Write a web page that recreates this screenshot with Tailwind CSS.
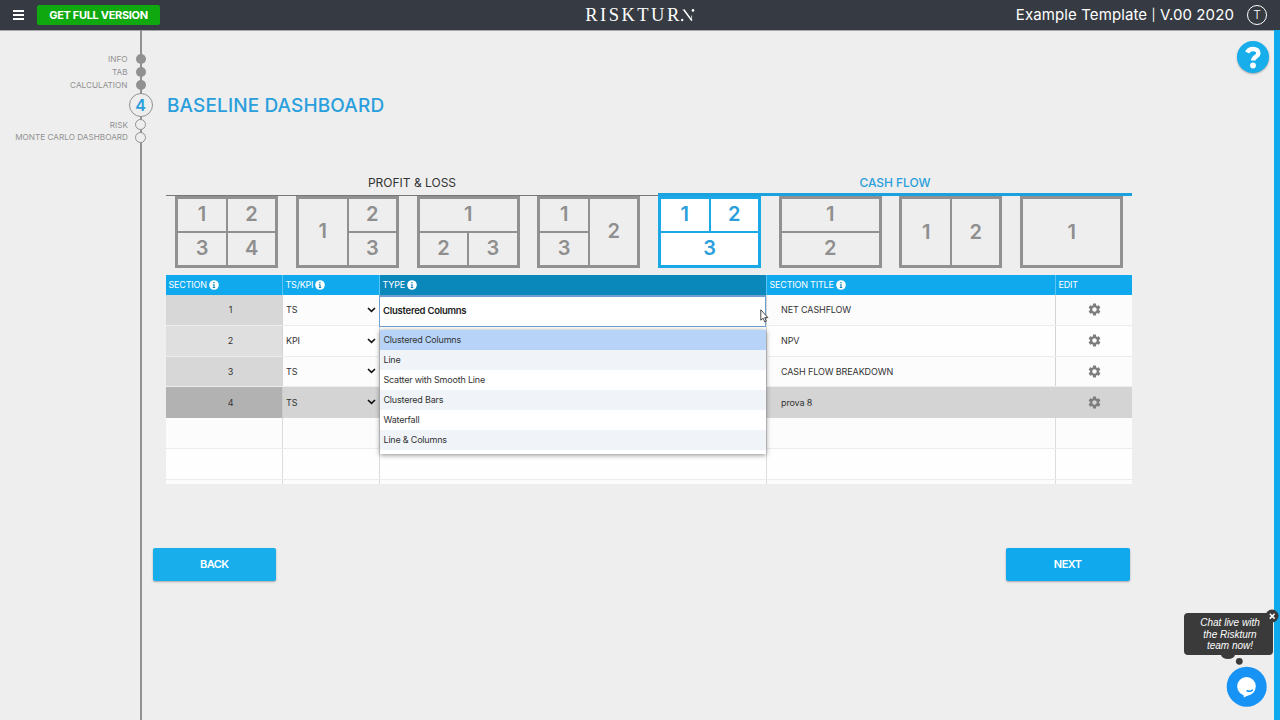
<!DOCTYPE html>
<html lang="en">

<head>
    <meta charset="UTF-8">
    <meta name="viewport" content="width=device-width, initial-scale=1.0">
    <script src="https://cdn.jsdelivr.net/npm/@tailwindcss/browser@4"></script>
    <title>Riskturn - Baseline Dashboard</title>
</head>

<body class="relative h-[720px] w-[1280px] overflow-hidden bg-[#eeeeee] font-['Inter',sans-serif]">
    <!-- Shared icons -->
    <svg class="hidden">
        <symbol id="info" viewBox="0 0 10 10">
            <circle cx="5" cy="5" r="4.8" fill="#fff" />
            <path d="M4.3 2h1.3v1.3H4.3zM3.8 4.2h1.8v2.9h.6v.8H3.8v-.8h.6V5h-.6z" fill="#0e86bb" />
        </symbol>
        <symbol id="gear" viewBox="1.5 1.5 21 21">
            <path d="M19.14 12.94c.04-.3.06-.61.06-.94 0-.32-.02-.64-.07-.94l2.03-1.58c.18-.14.23-.41.12-.61l-1.92-3.32c-.12-.22-.37-.29-.59-.22l-2.39.96c-.5-.38-1.03-.7-1.62-.94l-.36-2.54c-.04-.24-.24-.41-.48-.41h-3.84c-.24 0-.43.17-.47.41l-.36 2.54c-.59.24-1.13.57-1.62.94l-2.39-.96c-.22-.08-.47 0-.59.22L2.74 8.87c-.12.21-.08.47.12.61l2.03 1.58c-.05.3-.09.63-.09.94s.02.64.07.94l-2.03 1.58c-.18.14-.23.41-.12.61l1.92 3.32c.12.22.37.29.59.22l2.39-.96c.5.38 1.03.7 1.62.94l.36 2.54c.05.24.24.41.48.41h3.84c.24 0 .44-.17.47-.41l.36-2.54c.59-.24 1.13-.56 1.62-.94l2.39.96c.22.08.47 0 .59-.22l1.92-3.32c.12-.22.07-.47-.12-.61l-2.01-1.58zM12 15.6c-1.98 0-3.6-1.62-3.6-3.6s1.62-3.6 3.6-3.6 3.6 1.62 3.6 3.6-1.62 3.6-3.6 3.6z" fill="#7d7d7d" />
        </symbol>
        <symbol id="chevron" viewBox="0 0 8 6">
            <path d="M.5 1 4 4.4l3.5-3.4" fill="none" stroke="#111" stroke-width="1.6" />
        </symbol>
    </svg>

    <!-- Top bar -->
    <header class="flex h-[30px] items-center bg-[#363a42] text-white shadow-[0_1px_0_#a5a6a8]">
        <div class="flex flex-1 items-center">
            <div class="ml-[13px] flex w-[11px] flex-col gap-[2px]">
                <span class="h-[2px] bg-white"></span>
                <span class="h-[2px] bg-white"></span>
                <span class="h-[2px] bg-white"></span>
            </div>
            <button class="ml-[13px] h-5 w-[123px] rounded-[2px] bg-[#0fa80f] text-[11px] font-bold tracking-[-0.33px]">GET FULL VERSION</button>
        </div>
        <div class="flex items-center">
            <span class="font-['Liberation_Serif',serif] text-[18.5px] leading-none tracking-[2.5px]">RISKTUR</span>
            <svg class="-ml-[2px] h-[14px] w-[15px]" viewBox="0 0 15 14">
                <path d="M4 2 11.8 12.6" stroke="#fff" stroke-width="1.6" />
                <path d="M2.6 2h2.4" stroke="#fff" stroke-width=".8" />
                <circle cx="2.2" cy="12" r="1.2" fill="#fff" />
                <circle cx="13" cy="2.4" r="1.3" fill="#fff" />
                <path d="M11.6 7.5v5" stroke="#fff" stroke-width=".7" />
            </svg>
        </div>
        <div class="flex flex-1 items-center justify-end">
            <span class="text-[15px] tracking-[0.1px]">Example Template <span class="relative -top-px text-[12px]">|</span> V.00 2020</span>
            <span class="mr-[13px] ml-[13px] flex size-5 items-center justify-center rounded-full border-[1.5px] border-white text-[12px] font-light">T</span>
        </div>
    </header>

    <div class="flex h-[690px]">
        <!-- Steps -->
        <aside class="relative w-[152.5px] pt-[23px] text-[8.2px] leading-none text-[#919191]">
            <div class="absolute top-0 left-[140px] h-full w-[1.5px] bg-[#919191]"></div>
            <div class="relative flex h-[12.8px] items-center justify-end gap-2 pr-[7px]">INFO<span class="size-[10px] rounded-full bg-[#919191]"></span></div>
            <div class="relative flex h-[12.8px] items-center justify-end gap-2 pr-[7px]">TAB<span class="size-[10px] rounded-full bg-[#919191]"></span></div>
            <div class="relative flex h-[12.8px] items-center justify-end gap-2 pr-[7px]">CALCULATION<span class="size-[10px] rounded-full bg-[#919191]"></span></div>
            <div class="relative flex h-[27px] items-center justify-end">
                <span class="flex size-6 items-center justify-center rounded-full border-[1.5px] border-[#919191] bg-[#eeeeee] text-[16px] font-semibold text-[#2a9fdc]">4</span>
            </div>
            <div class="relative flex h-[12.5px] items-center justify-end gap-[7px] pr-[6.5px]">RISK<span class="size-[11px] rounded-full border-[1.5px] border-[#919191] bg-[#eeeeee]"></span></div>
            <div class="relative flex h-[12.5px] items-center justify-end gap-[7px] pr-[6.5px] whitespace-nowrap">MONTE CARLO DASHBOARD<span class="size-[11px] rounded-full border-[1.5px] border-[#919191] bg-[#eeeeee]"></span></div>
        </aside>

        <main class="w-[977px]">
            <h1 class="mt-[64px] ml-[14.5px] h-6 text-[19px] leading-6 font-medium tracking-[0.12px] text-[#2a9fdc]">BASELINE DASHBOARD</h1>

            <div class="mt-[52px] ml-[13.5px] w-[966px]">
                <!-- Tabs -->
                <div class="flex h-[26px] text-center text-[12px] leading-[26px]">
                    <div class="h-[26px] w-[492px] border-b border-[#777] text-[#333]">PROFIT &amp; LOSS</div>
                    <div class="w-[474px] border-b-[3px] border-[#1ba1dd] font-medium tracking-[-0.05px] text-[#2a9fdc]">CASH FLOW</div>
                </div>

                <!-- Layout choices -->
                <div class="grid h-[79px] grid-cols-8 justify-items-center pl-[0.5px] text-[20px] leading-none font-semibold text-[#8f8f8f]">
                    <div class="grid h-[72px] w-[103px] grid-cols-2 grid-rows-2 gap-[2px] border-[3px] border-[#919191] bg-[#919191] *:flex *:items-center *:justify-center *:bg-[#eeeeee] *:pb-[2px]">
                        <span>1</span><span>2</span><span>3</span><span>4</span>
                    </div>
                    <div class="grid h-[72px] w-[103px] grid-cols-2 grid-rows-2 gap-[2px] border-[3px] border-[#919191] bg-[#919191] *:flex *:items-center *:justify-center *:bg-[#eeeeee] *:pb-[2px]">
                        <span class="row-span-2">1</span><span>2</span><span>3</span>
                    </div>
                    <div class="grid h-[72px] w-[103px] grid-cols-2 grid-rows-2 gap-[2px] border-[3px] border-[#919191] bg-[#919191] *:flex *:items-center *:justify-center *:bg-[#eeeeee] *:pb-[2px]">
                        <span class="col-span-2">1</span><span>2</span><span>3</span>
                    </div>
                    <div class="grid h-[72px] w-[103px] grid-cols-2 grid-rows-2 gap-[2px] border-[3px] border-[#919191] bg-[#919191] *:flex *:items-center *:justify-center *:bg-[#eeeeee] *:pb-[2px]">
                        <span>1</span><span class="row-span-2">2</span><span>3</span>
                    </div>
                    <div class="grid h-[72px] w-[103px] grid-cols-2 grid-rows-2 gap-[2px] border-[3px] border-[#1ba8e6] bg-[#1ba8e6] text-[#2a9fdc] *:flex *:items-center *:justify-center *:bg-white *:pb-[2px]">
                        <span>1</span><span>2</span><span class="col-span-2">3</span>
                    </div>
                    <div class="grid h-[72px] w-[103px] grid-rows-2 gap-[2px] border-[3px] border-[#919191] bg-[#919191] *:flex *:items-center *:justify-center *:bg-[#eeeeee] *:pb-[2px]">
                        <span>1</span><span>2</span>
                    </div>
                    <div class="grid h-[72px] w-[103px] grid-cols-2 gap-[2px] border-[3px] border-[#919191] bg-[#919191] *:flex *:items-center *:justify-center *:bg-[#eeeeee]">
                        <span>1</span><span>2</span>
                    </div>
                    <div class="grid h-[72px] w-[103px] border-[3px] border-[#919191] bg-[#919191] *:flex *:items-center *:justify-center *:bg-[#eeeeee]">
                        <span>1</span>
                    </div>
                </div>

                <!-- Sections table -->
                <div class="relative h-[209px] text-[9px] tracking-[-0.12px] text-[#333]">
                    <div class="grid h-5 grid-cols-[117px_97px_387px_289px_76px] bg-[#10a9ee] tracking-[-0.2px] text-white *:flex *:items-center *:gap-[2px] *:border-[#5cc4f3] *:pl-[2.5px]">
                        <div class="border-r">SECTION<svg class="size-[10px]"><use href="#info" /></svg></div>
                        <div class="border-r">TS/KPI<svg class="size-[10px]"><use href="#info" /></svg></div>
                        <div class="border-r bg-[#0a87bb]">TYPE<svg class="size-[10px]"><use href="#info" /></svg></div>
                        <div class="border-r">SECTION TITLE<svg class="size-[10px]"><use href="#info" /></svg></div>
                        <div>EDIT</div>
                    </div>
                    <div class="grid h-[30.8px] grid-cols-[117px_97px_387px_289px_76px] border-b border-[#ececec] bg-[#fcfcfc] *:flex *:items-center *:border-[#d4d4d4]">
                        <div class="justify-center border-r bg-[#d7d7d7] pl-[13px]">1</div>
                        <div class="justify-between border-r pr-[3px] pl-[3px]">TS<svg class="h-[6px] w-[9px]"><use href="#chevron" /></svg></div>
                        <div class="border-r"></div>
                        <div class="border-r pl-[14px]">NET CASHFLOW</div>
                        <div class="justify-center"><svg class="size-[13px]"><use href="#gear" /></svg></div>
                    </div>
                    <div class="grid h-[30.8px] grid-cols-[117px_97px_387px_289px_76px] border-b border-[#ececec] bg-[#fefefe] *:flex *:items-center *:border-[#d4d4d4]">
                        <div class="justify-center border-r bg-[#dfdfdf] pl-[13px]">2</div>
                        <div class="justify-between border-r pr-[3px] pl-[3px]">KPI<svg class="h-[6px] w-[9px]"><use href="#chevron" /></svg></div>
                        <div class="border-r"></div>
                        <div class="border-r pl-[14px]">NPV</div>
                        <div class="justify-center"><svg class="size-[13px]"><use href="#gear" /></svg></div>
                    </div>
                    <div class="grid h-[30.8px] grid-cols-[117px_97px_387px_289px_76px] border-b border-[#ececec] bg-[#fcfcfc] *:flex *:items-center *:border-[#d4d4d4]">
                        <div class="justify-center border-r bg-[#d7d7d7] pl-[13px]">3</div>
                        <div class="justify-between border-r pr-[3px] pl-[3px]">TS<svg class="h-[6px] w-[9px]"><use href="#chevron" /></svg></div>
                        <div class="border-r"></div>
                        <div class="border-r pl-[14px]">CASH FLOW BREAKDOWN</div>
                        <div class="justify-center"><svg class="size-[13px]"><use href="#gear" /></svg></div>
                    </div>
                    <div class="grid h-[30.8px] grid-cols-[117px_97px_387px_289px_76px] bg-[#d4d4d4] *:flex *:items-center *:border-[#cbcbcb] *:pb-px">
                        <div class="justify-center border-r bg-[#b2b2b2] pl-[13px]">4</div>
                        <div class="justify-between border-r pr-[3px] pl-[3px]">TS<svg class="h-[6px] w-[9px]"><use href="#chevron" /></svg></div>
                        <div class="border-r"></div>
                        <div class="pl-[14px]">prova 8</div>
                        <div class="justify-center"><svg class="size-[13px]"><use href="#gear" /></svg></div>
                    </div>
                    <div class="grid h-[31px] grid-cols-[117px_97px_387px_289px_76px] border-b border-[#ececec] bg-[#fcfcfc] *:border-[#dcdcdc]">
                        <div class="border-r"></div><div class="border-r"></div><div class="border-r"></div><div class="border-r"></div>
                    </div>
                    <div class="grid h-[31px] grid-cols-[117px_97px_387px_289px_76px] border-b border-[#ececec] bg-[#fefefe] *:border-[#dcdcdc]">
                        <div class="border-r"></div><div class="border-r"></div><div class="border-r"></div><div class="border-r"></div>
                    </div>
                    <div class="grid h-[3.8px] grid-cols-[117px_97px_387px_289px_76px] bg-[#fcfcfc] *:border-[#dcdcdc]">
                        <div class="border-r"></div><div class="border-r"></div><div class="border-r"></div><div class="border-r"></div>
                    </div>

                    <!-- Cell editor and its list -->
                    <div class="absolute top-5 left-[213px] flex h-8 w-[387px] items-center border border-t-2 border-[#6f9fd0] bg-white pl-[3px] text-[9.5px] font-semibold tracking-[-0.25px] text-[#222]">Clustered Columns</div>
                    <div class="absolute top-[55px] left-[214px] w-[385.5px] bg-white pb-[3.5px] tracking-[-0.2px] shadow-[0_1px_5px_rgba(0,0,0,0.45)] *:h-5 *:pl-[3.5px] *:leading-[19px]">
                        <div class="bg-[#b7d3f7]">Clustered Columns</div>
                        <div class="bg-[#f0f4f8]">Line</div>
                        <div>Scatter with Smooth Line</div>
                        <div class="bg-[#f0f4f8]">Clustered Bars</div>
                        <div>Waterfall</div>
                        <div class="bg-[#f0f4f8]">Line &amp; Columns</div>
                    </div>
                    <svg class="absolute top-[34px] left-[594px] h-[14px] w-[9px]" viewBox="0 0 9 14">
                        <path d="M.8.8v10.4l2.3-2 1.6 3.6 1.6-.7-1.5-3.5h3.1z" fill="#fff" stroke="#333" stroke-width=".9" />
                    </svg>
                </div>
            </div>

            <div class="mt-[64px] flex justify-between text-[11px] font-semibold tracking-[-0.5px] text-white">
                <button class="h-[33px] w-[123.5px] rounded-[2px] bg-[#18adeb] shadow-[0_1px_2px_rgba(0,0,0,0.3)]">BACK</button>
                <button class="h-[33px] w-[123.5px] rounded-[2px] bg-[#10a9ee] shadow-[0_1px_2px_rgba(0,0,0,0.3)]">NEXT</button>
            </div>
        </main>

        <div class="ml-auto w-[6.5px] bg-[#10a9ee]"></div>
    </div>

    <!-- Help -->
    <div class="absolute top-[41px] left-[1237px] flex size-8 items-center justify-center rounded-full bg-[#18adeb] text-white shadow-[0_1px_2px_rgba(0,0,0,0.3)]">
        <svg class="size-[26px]" viewBox="0 0 26 26">
            <path d="M7.2 8.5C8.200 6.200 10.400 5 13 5c3.200 0 5.400 1.600 5.400 4.200 0 3.400-5.200 3.700-5.200 7.300" fill="none" stroke="#fff" stroke-width="4.500" />
            <circle cx="13" cy="21.500" r="2.900" fill="#fff" />
        </svg>
    </div>

    <!-- Live chat -->
    <div class="absolute top-[613px] left-[1184px] h-[42px] w-[89px] rounded-[4px] bg-[#3a3a3a] pt-[4px] pl-[3px] text-center font-['Liberation_Sans',sans-serif] text-[10px] leading-[11.5px] text-white italic">Chat live with<br>the Riskturn<br>team now!</div>
    <svg class="absolute top-[605px] left-[1216px] h-[115px] w-[64px]" viewBox="0 0 64 115">
        <path d="M5 49.5a7 4.5 0 0 0 14 0z" fill="#3a3a3a" />
        <circle cx="23.3" cy="56.3" r="3.4" fill="#3a3a3a" />
        <circle cx="56" cy="11" r="6.5" fill="#3a3a3a" />
        <path d="m53.8 8.8 4.8 4.8m0-4.8-4.8 4.8" stroke="#fff" stroke-width="1.5" />
        <circle cx="30.7" cy="81.7" r="20" fill="#1793f5" />
        <circle cx="30.5" cy="81.3" r="9.3" fill="#fff" />
        <path d="M27.5 88.5 27.8 92.6 34 89.500z" fill="#fff" />
        <path d="M31 85.800q3 1.300 5.500-.6" fill="none" stroke="#1793f5" stroke-width="1.500" stroke-linecap="round" />
    </svg>
</body>

</html>
